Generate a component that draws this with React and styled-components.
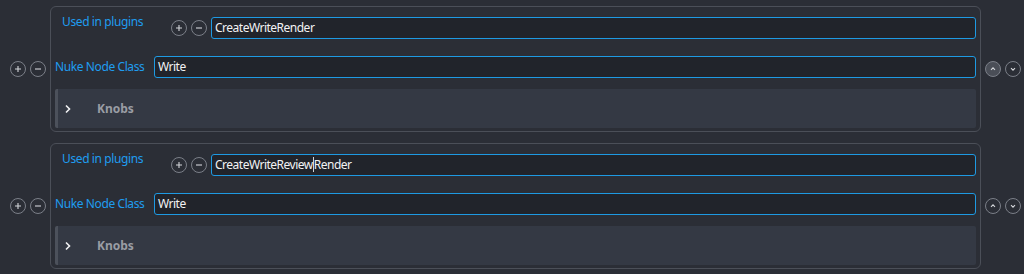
import React from 'react';
import styled, { createGlobalStyle } from 'styled-components';

const GlobalStyle = createGlobalStyle`
  html, body {
    margin: 0;
    padding: 0;
    background: #2b2e36;
  }
  body {
    font-family: "Noto Sans", "Open Sans", sans-serif;
    color: #d8dadf;
  }
`

const Page = styled.div`
  display: flex;
  flex-direction: column;
  gap: 11px;
  padding-top: 6px;
  width: 1024px;
`

const ItemRow = styled.div`
  display: flex;
  align-items: center;
`

const SideButtons = styled.div`
  display: flex;
  gap: 4px;
  padding: ${p => p.$right ? '0 3px 0 4px' : '0 4px 0 10px'};
`

const RoundButton = styled.button`
  width: 16px;
  height: 16px;
  padding: 0;
  border-radius: 50%;
  border: 1px solid #7b7f88;
  background: ${p => p.$hover ? '#4a4e57' : 'transparent'};
  display: flex;
  align-items: center;
  justify-content: center;
  color: #d4d6da;
  flex: none;
`

const Card = styled.div`
  flex: 1;
  border: 1px solid #4b4f58;
  border-radius: 6px;
  padding: 0 4px 3px 4px;
`

const FormGrid = styled.div`
  display: grid;
  grid-template-columns: 88px 1fr;
  column-gap: 11px;
  row-gap: 17px;
  padding-top: 6px;
`

const Label = styled.div`
  font-size: 12px;
  letter-spacing: -0.4px;
  line-height: 18px;
  color: #1f9df0;
  text-align: right;
  align-self: ${p => p.$top ? 'start' : 'center'};
  white-space: nowrap;
`

const ListField = styled.div`
  display: flex;
  align-items: center;
  gap: 4px;
  padding: 4px 0 0 17px;
`

const TextField = styled.div`
  flex: 1;
  height: 22px;
  box-sizing: border-box;
  border: 1px solid #1e9ae3;
  border-radius: 3px;
  background: #21242b;
  padding: 0 3px;
  font-size: 12px;
  letter-spacing: -0.5px;
  line-height: 20px;
  color: #f2f3f5;
  white-space: nowrap;
`

const Caret = styled.span`
  display: inline-block;
  width: 1px;
  height: 15px;
  background: #d0d2d6;
  vertical-align: -3px;
`

const Knobs = styled.div`
  margin-top: 11px;
  height: 39px;
  display: flex;
  align-items: center;
  background: #343944;
  border-left: 3px solid #4c515b;
  border-radius: 2px;
`

const Chevron = styled.span`
  width: 33px;
  padding-left: 6px;
  display: flex;
  align-items: center;
`

const KnobsTitle = styled.span`
  font-size: 12px;
  font-weight: 700;
  color: #9a9da4;
`

const Plus = () => (
  <svg width="8" height="8" viewBox="0 0 8 8">
    <path d="M4 1v6M1 4h6" stroke="currentColor" strokeWidth="1.1" />
  </svg>
)

const Minus = () => (
  <svg width="8" height="8" viewBox="0 0 8 8">
    <path d="M1 4h6" stroke="currentColor" strokeWidth="1.1" />
  </svg>
)

const Arrow = ({ down }) => (
  <svg width="8" height="8" viewBox="0 0 8 8">
    <path d={down ? 'M2 3.2l2 2 2-2' : 'M2 4.8l2-2 2 2'} stroke="currentColor" strokeWidth="1.1" fill="none" />
  </svg>
)

const items = [
  { plugin: 'CreateWriteRender', node: 'Write', hover: true },
  { plugin: 'CreateWriteReviewRender', caretAt: 17, node: 'Write' },
]

function Item({ item }) {
  const text = item.caretAt
    ? <>{item.plugin.slice(0, item.caretAt)}<Caret />{item.plugin.slice(item.caretAt)}</>
    : item.plugin

  return (
    <ItemRow>
      <SideButtons>
        <RoundButton><Plus /></RoundButton>
        <RoundButton><Minus /></RoundButton>
      </SideButtons>
      <Card>
        <FormGrid>
          <Label $top>Used in plugins</Label>
          <ListField>
            <RoundButton><Plus /></RoundButton>
            <RoundButton><Minus /></RoundButton>
            <TextField>{text}</TextField>
          </ListField>
          <Label>Nuke Node Class</Label>
          <TextField>{item.node}</TextField>
        </FormGrid>
        <Knobs>
          <Chevron>
            <svg width="8" height="10" viewBox="0 0 8 10">
              <path d="M2 1.5l3.5 3.5-3.5 3.5" stroke="#f0f1f3" strokeWidth="1.6" fill="none" />
            </svg>
          </Chevron>
          <KnobsTitle>Knobs</KnobsTitle>
        </Knobs>
      </Card>
      <SideButtons $right>
        <RoundButton $hover={item.hover}><Arrow /></RoundButton>
        <RoundButton><Arrow down /></RoundButton>
      </SideButtons>
    </ItemRow>
  )
}

export default function App() {
  return (
    <>
      <GlobalStyle />
      <Page>
        {items.map((it, i) => <Item key={i} item={it} />)}
      </Page>
    </>
  )
}
